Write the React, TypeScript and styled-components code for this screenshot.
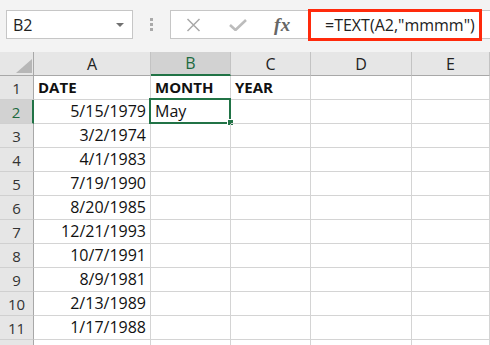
import React from 'react';
import styled, { createGlobalStyle } from 'styled-components';

const GlobalStyle = createGlobalStyle`
  html, body {
    margin: 0;
    padding: 0;
    background: #fff;
  }
  body {
    width: 490px;
    height: 345px;
    overflow: hidden;
    font-family: "Open Sans", "Noto Sans", sans-serif;
    color: #1f1f1f;
  }
`;

const Toolbar = styled.div`
  height: 52px;
  box-sizing: border-box;
  background: #f3f3f3;
  display: flex;
  align-items: flex-start;
  padding: 10px 0 0 6px;
`;

const NameBox = styled.div`
  width: 127px;
  height: 29px;
  box-sizing: border-box;
  background: #fff;
  border: 1px solid #c6c6c6;
  display: flex;
  align-items: center;
  justify-content: space-between;
  padding: 0 8px 0 6px;
  font-size: 16px;
  color: #222;
`;

const Caret = styled.span`
  width: 0;
  height: 0;
  border-left: 4px solid transparent;
  border-right: 4px solid transparent;
  border-top: 4px solid #707070;
  margin-top: 1px;
`;

const Grip = styled.div`
  width: 37px;
  height: 29px;
  display: flex;
  flex-direction: column;
  align-items: center;
  justify-content: center;
  gap: 2px;
`;

const GripDot = styled.span`
  width: 3px;
  height: 3px;
  background: #a9a9a9;
`;

const FormulaBar = styled.div`
  flex: 1;
  height: 29px;
  box-sizing: border-box;
  background: #fff;
  border: 1px solid #c6c6c6;
  border-right: none;
  display: flex;
  align-items: stretch;
`;

const FxButtons = styled.div`
  width: 137px;
  display: flex;
  align-items: center;
  padding-left: 15px;
  box-sizing: border-box;
`;

const IconSlot = styled.span<{ $gap: number }>`
  display: flex;
  margin-left: ${p => p.$gap}px;
`;

const FxLabel = styled.span`
  margin-left: 27px;
  font-family: "Liberation Serif", "DejaVu Serif", serif;
  font-style: italic;
  font-weight: 700;
  font-size: 19px;
  letter-spacing: 0.5px;
  color: #666;
  line-height: 1;
`;

const FormulaText = styled.div`
  width: 174px;
  box-sizing: border-box;
  margin: -2px 0 -3px 0;
  border: 3px solid #ff2a0c;
  padding-left: 14px;
  display: flex;
  align-items: center;
  font-size: 16px;
  color: #222;
  white-space: nowrap;
`;

const Sheet = styled.div`
  display: grid;
  grid-template-columns: 34px 117px 80px 80px 101px 1fr;
  grid-auto-rows: 24px;
  height: 293px;
  overflow: hidden;
`;

const Corner = styled.div`
  position: relative;
  box-sizing: border-box;
  background: #e6e6e6;
  border-right: 1px solid #a8a8a8;
  border-bottom: 1px solid #a8a8a8;

  &::after {
    content: '';
    position: absolute;
    right: 1px;
    bottom: 2px;
    width: 0;
    height: 0;
    border-left: 16px solid transparent;
    border-bottom: 14px solid #b7b7b7;
  }
`;

const ColHead = styled.div<{ $active?: boolean }>`
  box-sizing: border-box;
  background: ${p => (p.$active ? '#d2d2d2' : '#e6e6e6')};
  border-right: 1px solid #c3c3c3;
  border-bottom: ${p => (p.$active ? '2px solid #217346' : '1px solid #a8a8a8')};
  display: flex;
  align-items: center;
  justify-content: center;
  font-size: 16px;
  color: ${p => (p.$active ? '#1d6a3f' : '#222')};
`;

const RowHead = styled.div<{ $active?: boolean }>`
  box-sizing: border-box;
  background: ${p => (p.$active ? '#d2d2d2' : '#e6e6e6')};
  border-right: ${p => (p.$active ? '2px solid #217346' : '1px solid #a8a8a8')};
  border-bottom: 1px solid #d0d0d0;
  display: flex;
  align-items: center;
  justify-content: center;
  font-size: 15px;
  color: ${p => (p.$active ? '#1d6a3f' : '#333')};
`;

const Cell = styled.div<{ $align?: 'left' | 'right'; $bold?: boolean; $selected?: boolean }>`
  position: relative;
  box-sizing: border-box;
  border-right: 1px solid #d4d4d4;
  border-bottom: 1px solid #d4d4d4;
  padding: 0 4px 0 4px;
  line-height: 23px;
  font-size: ${p => (p.$bold ? '15px' : '16px')};
  font-weight: ${p => (p.$bold ? 700 : 400)};
  text-align: ${p => p.$align || 'left'};
  white-space: nowrap;
  color: #111;

  ${p =>
    p.$selected &&
    `
    &::before {
      content: '';
      position: absolute;
      top: -2px;
      left: -2px;
      right: -1px;
      bottom: -1px;
      border: 2px solid #217346;
      pointer-events: none;
    }
    &::after {
      content: '';
      position: absolute;
      right: -3px;
      bottom: -2px;
      width: 5px;
      height: 5px;
      background: #217346;
      box-shadow: -1px -1px 0 #fff;
    }
  `}
`;

const columns = ['A', 'B', 'C', 'D', 'E'];

const dates = [
  '5/15/1979',
  '3/2/1974',
  '4/1/1983',
  '7/19/1990',
  '8/20/1985',
  '12/21/1993',
  '10/7/1991',
  '8/9/1981',
  '2/13/1989',
  '1/17/1988',
];

const CrossIcon = () => (
  <svg width="15" height="14" viewBox="0 0 15 14">
    <path d="M1.5 1 L13.5 13 M13.5 1 L1.5 13" stroke="#a8a8a8" strokeWidth="1.5" fill="none" />
  </svg>
);

const CheckIcon = () => (
  <svg width="18" height="12" viewBox="0 0 18 12">
    <path d="M1 6 L6.5 11 L17 1" stroke="#bcbcbc" strokeWidth="2.6" fill="none" />
  </svg>
);

export default function App() {
  const rows: string[][] = [
    ['DATE', 'MONTH', 'YEAR', '', ''],
    ...dates.map((d, i) => [d, i === 0 ? 'May' : '', '', '', '']),
    ['', '', '', '', ''],
  ];

  return (
    <>
      <GlobalStyle />
      <Toolbar>
        <NameBox>
          <span>B2</span>
          <Caret />
        </NameBox>
        <Grip>
          <GripDot />
          <GripDot />
          <GripDot />
        </Grip>
        <FormulaBar>
          <FxButtons>
            <IconSlot $gap={0}>
              <CrossIcon />
            </IconSlot>
            <IconSlot $gap={28}>
              <CheckIcon />
            </IconSlot>
            <FxLabel>fx</FxLabel>
          </FxButtons>
          <FormulaText>=TEXT(A2,"mmmm")</FormulaText>
        </FormulaBar>
      </Toolbar>

      <Sheet>
        <Corner />
        {columns.map(c => (
          <ColHead key={c} $active={c === 'B'}>
            {c}
          </ColHead>
        ))}
        {rows.map((row, r) => (
          <React.Fragment key={r}>
            <RowHead $active={r === 1}>{r < 11 ? r + 1 : ''}</RowHead>
            {row.map((val, c) => (
              <Cell
                key={c}
                $bold={r === 0}
                $align={r > 0 && c === 0 ? 'right' : 'left'}
                $selected={r === 1 && c === 1}
              >
                {val}
              </Cell>
            ))}
          </React.Fragment>
        ))}
      </Sheet>
    </>
  );
}
